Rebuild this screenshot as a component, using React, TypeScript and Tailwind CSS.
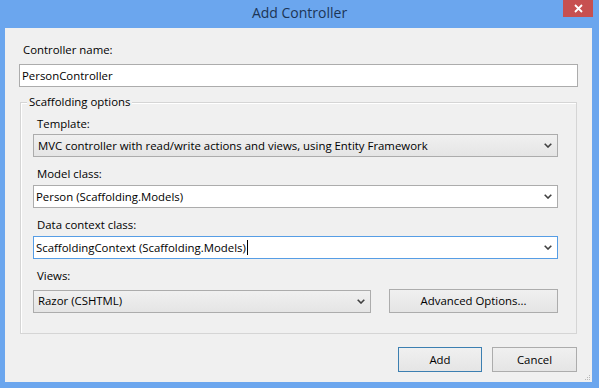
import React from 'react';

function Chevron() {
  return (
    <svg width="8" height="5" viewBox="0 0 8 5" className="shrink-0">
      <path d="M0.7 0.7 L4 4 L7.3 0.7" fill="none" stroke="#404040" strokeWidth="1.6" />
    </svg>
  );
}

interface ComboProps {
  value: string;
  editable?: boolean;
  focused?: boolean;
  caret?: boolean;
  className?: string;
}

function Combo({ value, editable, focused, caret, className = '' }: ComboProps) {
  const skin = editable
    ? focused
      ? 'bg-white border-[#569de5]'
      : 'bg-white border-[#acacac]'
    : 'bg-gradient-to-b from-[#f0f0f0] to-[#e5e5e5] border-[#acacac]';
  return (
    <div className={`h-[23px] border flex items-center pr-[5px] ${editable ? 'pl-[2px]' : 'pl-[4px]'} ${skin} ${className}`}>
      <span className="flex-1 flex items-center whitespace-nowrap overflow-hidden leading-[16px]">
        {value}
        {caret && <span className="inline-block w-px h-[15px] bg-black ml-px" />}
      </span>
      <Chevron />
    </div>
  );
}

function Field({ label, top, gap, children }: { label: string; top: string; gap: string; children: React.ReactNode }) {
  return (
    <div className={top}>
      <div className="leading-[16px] pl-[4px]">{label}</div>
      <div className={gap}>{children}</div>
    </div>
  );
}

export default function App() {
  return (
    <div className="w-[599px] h-[388px] bg-[#6ba6ee] flex flex-col font-['Open_Sans',sans-serif] text-[11.4px] text-black overflow-hidden">
      {/* title bar */}
      <div className="relative h-[28px] shrink-0 flex items-center justify-center">
        <span className="text-[14px] leading-none text-[#1c3556] -mt-[2px]">Add Controller</span>
        <div className="absolute right-[6px] top-0 w-[30px] h-[17px] bg-[#c75050] flex items-center justify-center">
          <svg width="9" height="9" viewBox="0 0 9 9">
            <path d="M1 1 L8 8 M8 1 L1 8" stroke="#fff" strokeWidth="1.8" />
          </svg>
        </div>
      </div>

      {/* client area */}
      <div className="relative flex-1 ml-[5px] mr-[7px] mb-[6px] bg-[#f0f0f0] px-[14px]">
        <div className="mt-[14px] leading-[16px] pl-[4px]">Controller name:</div>
        <div className="mt-[6px] h-[23px] bg-white border border-[#acacac] flex items-center pl-[2px] leading-[16px]">
          PersonController
        </div>

        {/* scaffolding group */}
        <div className="relative mt-[15px] mx-px border border-[#d5d5d5] shadow-[inset_1px_1px_0_#ffffff] pl-[12px] pr-[18px] pt-px pb-[20px]">
          <span className="absolute -top-[9px] left-[6px] px-[2px] bg-[#f0f0f0] leading-[16px]">Scaffolding options</span>

          <Field label="Template:" top="mt-[12px]" gap="mt-[2px]">
            <Combo value="MVC controller with read/write actions and views, using Entity Framework" />
          </Field>
          <Field label="Model class:" top="mt-[9px]" gap="mt-[3px]">
            <Combo value="Person (Scaffolding.Models)" editable />
          </Field>
          <Field label="Data context class:" top="mt-[9px]" gap="mt-[3px]">
            <Combo value="ScaffoldingContext (Scaffolding.Models)" editable focused caret />
          </Field>
          <Field label="Views:" top="mt-[9px]" gap="mt-[5px]">
            <div className="flex items-center">
              <Combo value="Razor (CSHTML)" className="w-[338px]" />
              <button className="ml-[18px] flex-1 h-[24px] border border-[#acacac] bg-gradient-to-b from-[#f0f0f0] to-[#e5e5e5] leading-[16px]">
                Advanced Options...
              </button>
            </div>
          </Field>
        </div>

        {/* dialog buttons */}
        <div className="mt-[13px] mr-px flex justify-end gap-[10px]">
          <button className="w-[84px] h-[25px] border border-[#3c7fb1] bg-gradient-to-b from-[#f0f0f0] to-[#e5e5e5] leading-[16px]">
            Add
          </button>
          <button className="w-[85px] h-[25px] border border-[#acacac] bg-gradient-to-b from-[#f0f0f0] to-[#e5e5e5] leading-[16px]">
            Cancel
          </button>
        </div>

        {/* size grip */}
        <div className="absolute right-[2px] bottom-[2px] grid grid-cols-3 gap-px">
          <span className="w-px h-px" />
          <span className="w-px h-px" />
          <span className="w-px h-px bg-[#b8b8b8]" />
          <span className="w-px h-px" />
          <span className="w-px h-px bg-[#b8b8b8]" />
          <span className="w-px h-px bg-[#b8b8b8]" />
          <span className="w-px h-px bg-[#b8b8b8]" />
          <span className="w-px h-px bg-[#b8b8b8]" />
          <span className="w-px h-px bg-[#b8b8b8]" />
        </div>
      </div>
    </div>
  );
}
